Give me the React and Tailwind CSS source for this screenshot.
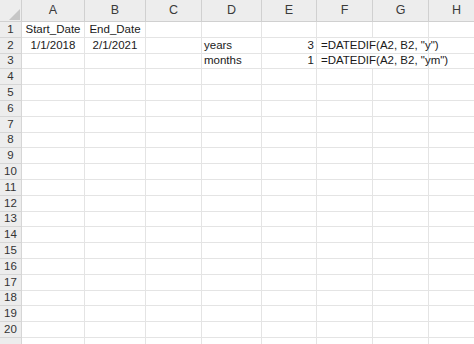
const cols = ['A', 'B', 'C', 'D', 'E', 'F', 'G', 'H'];

const data = {
  1: [
    { text: 'Start_Date', align: 'center' },
    { text: 'End_Date', align: 'center' },
  ],
  2: [
    { text: '1/1/2018', align: 'center' },
    { text: '2/1/2021', align: 'center' },
    null,
    { text: 'years', align: 'left' },
    { text: '3', align: 'right' },
    { text: '=DATEDIF(A2, B2, "y")', align: 'formula', span: 2 },
  ],
  3: [
    null,
    null,
    null,
    { text: 'months', align: 'left' },
    { text: '1', align: 'right' },
    { text: '=DATEDIF(A2, B2, "ym")', align: 'formula', span: 2 },
  ],
};

const alignCls = {
  left: 'justify-start pl-[2px]',
  formula: 'justify-start pl-[4px]',
  center: 'justify-center',
  right: 'justify-end pr-[2px]',
};

function Row({ n, label = true }) {
  const cells = data[n] || [];
  const out = [];
  let i = 0;
  while (i < cols.length) {
    const c = cells[i];
    const span = c?.span || 1;
    out.push(
      <div
        key={i}
        className={`flex items-center h-[15.8px] border-r border-b border-[#e4e4e4] whitespace-nowrap text-[11.5px] text-[#1a1a1a] ${span === 2 ? 'col-span-2' : ''} ${alignCls[c?.align || 'left']}`}
      >
        {c?.text}
      </div>
    );
    i += span;
  }
  return (
    <>
      <div className="flex items-center justify-center h-[15.8px] bg-[#ededed] border-r border-b border-[#d6d6d6] text-[11.5px] text-[#333]">
        {label ? n : ''}
      </div>
      {out}
    </>
  );
}

export default function App() {
  const rows = Array.from({ length: 20 }, (_, i) => i + 1);
  return (
    <div
      className="w-[474px] h-[344px] overflow-hidden bg-white"
      style={{ fontFamily: '"Liberation Sans", Arial, sans-serif' }}
    >
      <div className="grid grid-cols-[22px_63px_61px_56px_60px_55px_56px_56px_56px]">
        <div className="relative h-[22px] bg-[#ededed] border-r border-b border-[#d0d0d0]">
          <svg className="absolute left-[9px] top-[9px]" width="11" height="11" viewBox="0 0 11 11">
            <polygon points="11,0 11,11 0,11" fill="#c6c6c6" />
          </svg>
        </div>
        {cols.map(c => (
          <div
            key={c}
            className="flex items-center justify-center h-[22px] bg-[#ededed] border-r border-b border-[#d0d0d0] text-[12.5px] text-[#3a3a3a]"
          >
            {c}
          </div>
        ))}
        {rows.map(n => (
          <Row key={n} n={n} />
        ))}
        <Row n={21} label={false} />
      </div>
    </div>
  );
}
